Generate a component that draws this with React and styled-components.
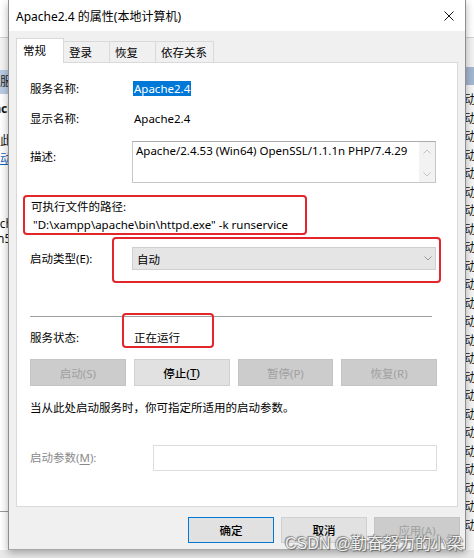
import React from "react";
import styled, { createGlobalStyle } from "styled-components";

const Global = createGlobalStyle`
  html, body { margin: 0; padding: 0; background: #ebebeb; }
  body { font-family: "Noto Sans", "Noto Sans CJK SC", sans-serif; }
`;

const FONT = `"Noto Sans", "Noto Sans CJK SC", sans-serif`;

const Screen = styled.div`
  position: relative;
  width: 474px;
  height: 558px;
  overflow: hidden;
  display: flex;
  flex-direction: column;
  background: #ebebeb;
  font-family: ${FONT};
  font-size: 11.5px;
  color: #000;
`;

const Desk = styled.div`
  display: flex;
  height: 550px;
  flex: none;
`;

const Strip = styled.div`
  width: 8px;
  flex: none;
  overflow: hidden;
  background: ${(p) => p.$bg || "#fff"};
  display: flex;
  flex-direction: column;
  white-space: nowrap;
  font-size: 12px;
`;

const StripTop = styled.div`
  height: 37px;
  flex: none;
  background: #fff;
  border-bottom: 1px solid #d2d2d2;
`;

const StripFill = styled.div`
  height: ${(p) => p.$h}px;
  flex: none;
  background: ${(p) => p.$bg || "#f4f4f4"};
`;

const StripHead = styled.div`
  height: ${(p) => p.$h}px;
  flex: none;
  background: ${(p) => p.$bg};
  line-height: ${(p) => p.$h}px;
  color: #222;
`;

const StripText = styled.div`
  flex: none;
  height: ${(p) => p.$h || 18}px;
  line-height: ${(p) => p.$h || 18}px;
  margin-top: ${(p) => p.$mt || 0}px;
  margin-left: ${(p) => p.$ml || 0}px;
  font-weight: ${(p) => (p.$bold ? 700 : 400)};
  color: ${(p) => p.$color || "#111"};
  text-decoration: ${(p) => (p.$link ? "underline" : "none")};
`;

const StripRule = styled.div`
  flex: none;
  height: 1px;
  margin-top: ${(p) => p.$mt}px;
  background: #9a9a9a;
`;

const Dialog = styled.div`
  width: 458px;
  flex: none;
  box-sizing: border-box;
  display: flex;
  flex-direction: column;
  background: #f0f0f0;
  border-left: 1px solid #8e8e8e;
  border-right: 1px solid #8e8e8e;
  border-bottom: 1px solid #a8a8a8;
  box-shadow: 0 3px 8px rgba(0, 0, 0, 0.3);
  position: relative;
  z-index: 1;
`;

const TitleBar = styled.div`
  height: 31px;
  flex: none;
  background: #fff;
  display: flex;
  align-items: center;
  justify-content: space-between;
  padding: 0 11px 0 7px;
  font-size: 12px;
  color: #000;
`;

const CloseButton = styled.div`
  width: 10px;
  height: 10px;
  display: flex;
`;

const Body = styled.div`
  flex: 1;
  display: flex;
  flex-direction: column;
  padding: 0 7px;
`;

const TabBar = styled.div`
  margin-top: 7px;
  height: 25px;
  flex: none;
  display: flex;
  align-items: flex-end;
  position: relative;
  z-index: 2;
`;

const Tab = styled.div`
  box-sizing: border-box;
  width: ${(p) => p.$w}px;
  height: ${(p) => (p.$active ? 25 : 21)}px;
  margin-bottom: ${(p) => (p.$active ? 0 : 1)}px;
  padding-left: ${(p) => (p.$active ? 6 : 5)}px;
  line-height: ${(p) => (p.$active ? 24 : 21)}px;
  background: ${(p) => (p.$active ? "#fff" : "#f0f0f0")};
  border: 1px solid #d9d9d9;
  border-bottom: none;
  border-left: ${(p) => (p.$active ? "1px solid #d9d9d9" : "none")};
`;

const Panel = styled.div`
  position: relative;
  box-sizing: border-box;
  height: 445px;
  flex: none;
  margin-top: -1px;
  background: #fff;
  border: 1px solid #d9d9d9;
  padding: 15px 20px 0 13px;
  display: flex;
  flex-direction: column;
`;

const Row = styled.div`
  position: relative;
  display: grid;
  grid-template-columns: ${(p) => p.$label || 102}px 1fr;
  align-items: ${(p) => p.$align || "center"};
  height: ${(p) => p.$h}px;
  margin-top: ${(p) => p.$mt || 0}px;
  flex: none;
`;

const Label = styled.div`
  line-height: 18px;
  padding-top: ${(p) => p.$pt || 0}px;
  color: ${(p) => (p.$disabled ? "#8a8a8a" : "#000")};
  white-space: nowrap;
`;

const Value = styled.div`
  padding-left: 2px;
  line-height: 18px;
  white-space: nowrap;
`;

const Selected = styled.span`
  background: #0078d7;
  color: #fff;
  padding: 0 1px;
  margin-left: -1px;
  line-height: 15px;
  display: inline-block;
`;

const TextArea = styled.div`
  box-sizing: border-box;
  width: 304px;
  height: 42px;
  border: 1px solid #c6c6c6;
  border-top-color: #acacac;
  display: flex;
`;

const AreaText = styled.div`
  flex: 1;
  padding-left: 3px;
  line-height: 18px;
  white-space: nowrap;
  overflow: hidden;
`;

const ScrollBar = styled.div`
  width: 16px;
  flex: none;
  background: #f2f2f2;
  display: flex;
  flex-direction: column;
  align-items: center;
  justify-content: space-between;
  padding: 7px 0 5px;
  box-sizing: border-box;
`;

const PathBlock = styled.div`
  position: relative;
  margin-top: ${(p) => p.$mt}px;
  flex: none;
`;

const Line = styled.div`
  line-height: 18px;
  padding-left: ${(p) => p.$pl || 0}px;
  white-space: nowrap;
  color: ${(p) => p.$color || "#000"};
  font-size: ${(p) => p.$fs || 11.5}px;
`;

const Combo = styled.div`
  box-sizing: border-box;
  width: 304px;
  height: 23px;
  background: #e5e5e5;
  border: 1px solid #cfcfcf;
  display: flex;
  align-items: center;
  justify-content: space-between;
  padding: 0 3px 0 4px;
`;

const Separator = styled.div`
  height: 1px;
  flex: none;
  width: 402px;
  margin-top: 46px;
  background: #a0a0a0;
`;

const ButtonGrid = styled.div`
  display: grid;
  grid-template-columns: repeat(4, 1fr);
  gap: 8px;
  height: 27px;
  margin-top: 10px;
  flex: none;
`;

const Button = styled.div`
  box-sizing: border-box;
  height: ${(p) => p.$h || 27}px;
  width: ${(p) => (p.$w ? `${p.$w}px` : "auto")};
  display: flex;
  align-items: center;
  justify-content: center;
  white-space: nowrap;
  font-weight: ${(p) => (p.$disabled ? 400 : 500)};
  background: ${(p) => (p.$disabled ? "#cccccc" : "#e1e1e1")};
  border: 1px solid
    ${(p) => (p.$default ? "#0078d7" : p.$disabled ? "#c4c4c4" : "#d0d0d0")};
  color: ${(p) => (p.$disabled ? "#a0a0a0" : "#000")};
`;

const Key = styled.span`
  text-decoration: underline;
  text-underline-offset: 2px;
`;

const Input = styled.div`
  box-sizing: border-box;
  width: 284px;
  height: 26px;
  background: #fff;
  border: 1px solid #dcdcdc;
`;

const RedMark = styled.div`
  position: absolute;
  left: ${(p) => p.$l}px;
  top: ${(p) => p.$t}px;
  width: ${(p) => p.$w}px;
  height: ${(p) => p.$h}px;
  box-sizing: border-box;
  border: 2px solid #e3262b;
  border-radius: 4px;
  pointer-events: none;
`;

const Footer = styled.div`
  display: flex;
  justify-content: flex-end;
  gap: 7px;
  padding-top: 10px;
  margin-right: -2px;
`;

const BottomStrip = styled.div`
  height: 8px;
  flex: none;
  background: #e9e9e9;
`;

const Watermark = styled.div`
  position: absolute;
  right: 11px;
  top: 534px;
  z-index: 5;
  font-family: "Liberation Sans", "Noto Sans CJK SC", sans-serif;
  font-size: 16px;
  line-height: 20px;
  color: rgba(255, 255, 255, 0.92);
  text-shadow: 0 0 1px #5a5a5a, 1px 1px 1px #6a6a6a, -1px -1px 1px #8a8a8a;
  white-space: nowrap;
`;

const Chevron = ({ up, color = "#a8a8a8" }) => (
  <svg width="8" height="5" viewBox="0 0 8 5">
    <path
      d={up ? "M0.5 4.5 L4 1 L7.5 4.5" : "M0.5 0.5 L4 4 L7.5 0.5"}
      fill="none"
      stroke={color}
      strokeWidth="1"
    />
  </svg>
);

const CloseIcon = () => (
  <svg width="10" height="10" viewBox="0 0 10 10">
    <path d="M0.5 0.5 L9.5 9.5 M9.5 0.5 L0.5 9.5" stroke="#111" strokeWidth="1" />
  </svg>
);

const rightRows = Array.from({ length: 24 }, (_, i) => i);

export default function App() {
  return (
    <>
      <Global />
      <Screen>
        <Desk>
          <Strip>
            <StripTop />
            <StripFill $h={32} />
            <StripHead $h={24} $bg="#b9cce3">服务</StripHead>
            <StripText $mt={6} $ml={-22} $bold>Apache</StripText>
            <StripText $mt={14}>此服务</StripText>
            <StripText $color="#1a5fb4" $link>动此</StripText>
            <StripText $mt={48} $h={15} $ml={-22}>Apache</StripText>
            <StripText $h={15} $ml={-3}>n5</StripText>
            <StripRule $mt={265} />
          </Strip>

          <Dialog>
            <TitleBar>
              <span>Apache2.4 的属性(本地计算机)</span>
              <CloseButton>
                <CloseIcon />
              </CloseButton>
            </TitleBar>
            <Body>
              <TabBar>
                <Tab $active $w={48}>常规</Tab>
                <Tab $w={46}>登录</Tab>
                <Tab $w={46}>恢复</Tab>
                <Tab $w={58}>依存关系</Tab>
              </TabBar>
              <Panel>
                <Row $h={22}>
                  <Label>服务名称:</Label>
                  <Value>
                    <Selected>Apache2.4</Selected>
                  </Value>
                </Row>
                <Row $h={22} $mt={8}>
                  <Label>显示名称:</Label>
                  <Value>Apache2.4</Value>
                </Row>
                <Row $h={42} $mt={11} $align="start">
                  <Label $pt={7}>描述:</Label>
                  <TextArea>
                    <AreaText>Apache/2.4.53 (Win64) OpenSSL/1.1.1n PHP/7.4.29</AreaText>
                    <ScrollBar>
                      <Chevron up color="#c2c2c2" />
                      <Chevron color="#c2c2c2" />
                    </ScrollBar>
                  </TextArea>
                </Row>
                <PathBlock $mt={15}>
                  <Line $pl={1}>可执行文件的路径:</Line>
                  <Line $pl={3}>"D:\xampp\apache\bin\httpd.exe" -k runservice</Line>
                  <RedMark $l={-7} $t={-3} $w={284} $h={40} />
                </PathBlock>
                <Row $h={23} $mt={13}>
                  <Label>启动类型(E):</Label>
                  <Combo>
                    <span>自动</span>
                    <Chevron color="#9a9a9a" />
                  </Combo>
                  <RedMark $l={82} $t={-10} $w={329} $h={46} />
                </Row>
                <Separator />
                <Row $h={22} $mt={10}>
                  <Label>服务状态:</Label>
                  <Value>正在运行</Value>
                  <RedMark $l={92} $t={-14} $w={92} $h={35} />
                </Row>
                <ButtonGrid>
                  <Button $disabled>启动(S)</Button>
                  <Button>
                    停止(<Key>T</Key>)
                  </Button>
                  <Button $disabled>暂停(P)</Button>
                  <Button $disabled>恢复(R)</Button>
                </ButtonGrid>
                <PathBlock $mt={13}>
                  <Line>当从此处启动服务时，你可指定所适用的启动参数。</Line>
                </PathBlock>
                <Row $h={26} $mt={28} $label={123}>
                  <Label $disabled>
                    启动参数(<Key>M</Key>):
                  </Label>
                  <Input />
                </Row>
              </Panel>
              <Footer>
                <Button $default $w={86} $h={26}>确定</Button>
                <Button $w={86} $h={26}>取消</Button>
                <Button $disabled $w={86} $h={26}>应用(A)</Button>
              </Footer>
            </Body>
          </Dialog>

          <Strip $bg="#f6f6f6">
            <StripTop />
            <StripFill $h={29} $bg="#f3f3f3" />
            <StripHead $h={18} $bg="#a3b7d0" />
            {rightRows.map((i) => (
              <StripText key={i} $h={18.5} $ml={-2} $mt={i === 0 ? 6 : 0}>
                动
              </StripText>
            ))}
          </Strip>
        </Desk>
        <BottomStrip />
        <Watermark>CSDN @勤奋努力的小梁</Watermark>
      </Screen>
    </>
  );
}
